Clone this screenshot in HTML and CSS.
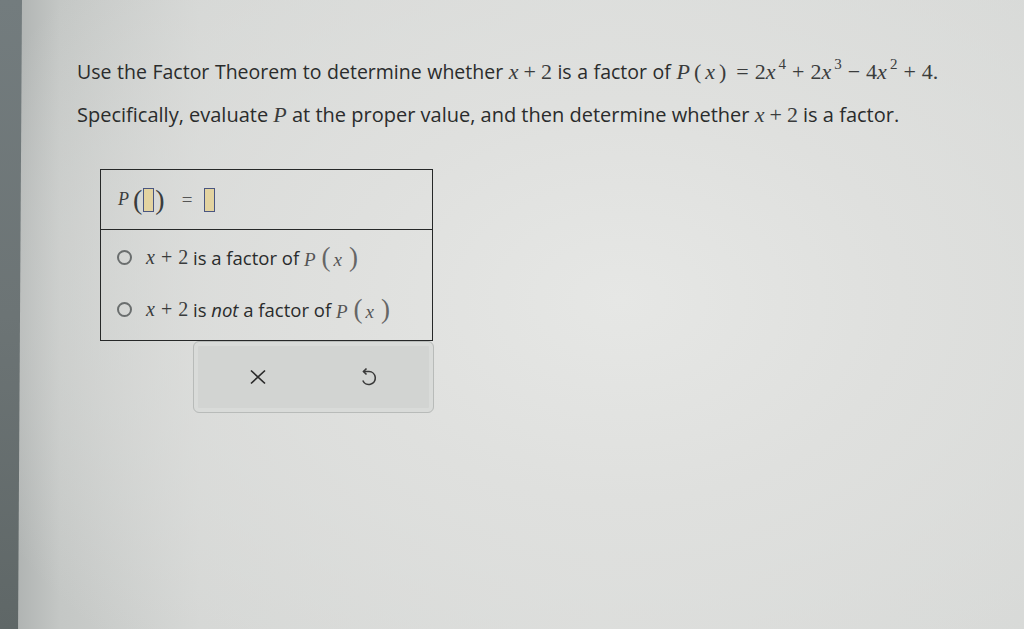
FILE: index.html
```html
<!DOCTYPE html>
<html>
<head>
<meta charset="utf-8">
<link rel="stylesheet" href="styles.css">
</head>
<body>
<div class="page">
  <div class="strip"></div>
  <main class="main">
    <p class="line l1">Use the Factor Theorem to determine whether <span class="m"><i>x</i><span class="op">+</span>2</span> is a factor of <span class="m eqn"><i>P</i><span class="bp">(</span><i>x</i><span class="bp">)</span><span class="op">=</span>2<i>x</i><sup>4</sup><span class="op">+</span>2<i>x</i><sup>3</sup><span class="op">&minus;</span>4<i>x</i><sup>2</sup><span class="op">+</span>4.</span></p>
    <p class="line l2">Specifically, evaluate <span class="m"><i>P</i></span> at the proper value, and then determine whether <span class="m"><i>x</i><span class="op">+</span>2</span> is a factor.</p>
    <div class="box">
      <div class="row-eval">
        <span class="sm"><i>P</i></span><span class="paren">(</span><span class="inp"></span><span class="paren">)</span><span class="eq">=</span><span class="inp"></span>
      </div>
      <div class="opts">
        <div class="opt"><span class="radio"></span><span class="sm2"><i>x</i><span class="op2">+</span>2</span>&nbsp;is a factor of <span class="sm3"><i>P</i><span class="gp">(</span><i>x</i><span class="gp">)</span></span></div>
        <div class="opt"><span class="radio"></span><span class="sm2"><i>x</i><span class="op2">+</span>2</span>&nbsp;is <em>not</em> a factor of <span class="sm3"><i>P</i><span class="gp">(</span><i>x</i><span class="gp">)</span></span></div>
      </div>
    </div>
    <div class="btns">
      <div class="btn">
        <svg width="18" height="16" viewBox="0 0 18 16"><path d="M2 1.5 L16 14.5 M16 1.5 L2 14.5" stroke="#2a2a2a" stroke-width="1.7" fill="none"/></svg>
      </div>
      <div class="btn">
        <svg width="18" height="20" viewBox="0 0 18 20"><path d="M3.5 4.5 H9 A6.5 6.5 0 1 1 2.8 13.5" stroke="#3a3a3a" stroke-width="1.6" fill="none"/><path d="M6.5 1.5 L3.5 4.5 L6.5 7.5" stroke="#3a3a3a" stroke-width="1.6" fill="none"/></svg>
      </div>
    </div>
  </main>
</div>
</body>
</html>
```
FILE: styles.css
```css
html, body { margin: 0; padding: 0; }
body {
  width: 1024px;
  height: 629px;
  overflow: hidden;
  font-family: "Open Sans", "Liberation Sans", sans-serif;
  color: #2a2c2c;
}
.page {
  display: flex;
  height: 629px;
  background:
    radial-gradient(ellipse 700px 500px at 620px 300px, #e6e7e5 0%, #dfe0de 40%, rgba(214,216,214,0) 100%),
    linear-gradient(90deg, #a8acab 0px, #c4c7c5 60px, #d4d6d4 200px, #d9dbd9 600px, #d6d8d6 1024px);
}
.strip {
  width: 22px;
  flex: none;
  background: linear-gradient(180deg, #737c7e 0%, #6c7475 50%, #5f6767 100%);
  clip-path: polygon(0 0, 100% 0, 82% 100%, 0 100%);
}
.main {
  flex: 1;
  padding-left: 55px;
  padding-top: 59px;
}
.line {
  margin: 0;
  font-size: 19.5px;
  line-height: 26px;
  white-space: nowrap;
}
.l1 { word-spacing: 0.5px; }
.l2 { margin-top: 17px; font-size: 20px; }
.m {
  font-family: "Liberation Serif", "DejaVu Serif", serif;
  font-size: 22px;
  color: #3a3c3c;
  word-spacing: 0;
}
.m .op { margin: 0 5px; }
.m .bp { margin: 0 4px; }
.eqn .op { margin: 0 6px; }
.m sup {
  font-size: 15px;
  vertical-align: 10px;
  line-height: 0;
  margin-left: 3px;
}
.box {
  margin-top: 41px;
  margin-left: 23px;
  width: 331px;
  border: 1px solid #262828;
}
.row-eval {
  height: 59px;
  border-bottom: 1px solid #262828;
  display: flex;
  align-items: center;
  padding-left: 17px;
  font-family: "Liberation Serif", serif;
  font-size: 18px;
  color: #3a3c3c;
}
.row-eval .paren { font-size: 28px; margin: 0 1px; line-height: 1; }
.row-eval .sm { margin-right: 3px; }
.row-eval .eq { margin: 0 12px 0 16px; font-size: 19px; color: #555; }
.inp {
  display: inline-block;
  width: 9px;
  height: 22px;
  border: 1.5px solid #4a5680;
  background: #e3d3a0;
}
.opts {
  padding: 11px 0 15px 16px;
}
.opt {
  display: flex;
  align-items: center;
  height: 32px;
  font-size: 18.5px;
  white-space: pre;
}
.opt:first-child { margin-bottom: 20px; }
.radio {
  width: 11px;
  height: 11px;
  border: 2px solid #6a6e6e;
  border-radius: 50%;
  margin-right: 14px;
  flex: none;
}
.sm2 {
  font-family: "Liberation Serif", serif;
  font-size: 20px;
  color: #3a3c3c;
}
.op2 { margin: 0 6px; }
.sm3 {
  font-family: "Liberation Serif", serif;
  font-size: 19px;
  color: #555;
}
.gp { font-size: 27px; color: #666; margin: 0 3px 0 6px; }
.gp + i + .gp { margin: 0 0 0 7px; }
.btns {
  margin-left: 116px;
  margin-top: 0px;
  width: 241px;
  height: 72px;
  border: 1.5px solid #b8bbb9;
  border-radius: 6px;
  background: #d2d4d2;
  display: flex;
  justify-content: space-around;
  align-items: center;
  padding: 0 8px;
  box-sizing: border-box;
  box-shadow: inset 0 0 0 4px #d9dbd9;
}
.btn { width: 60px; display: flex; justify-content: center; }
```
